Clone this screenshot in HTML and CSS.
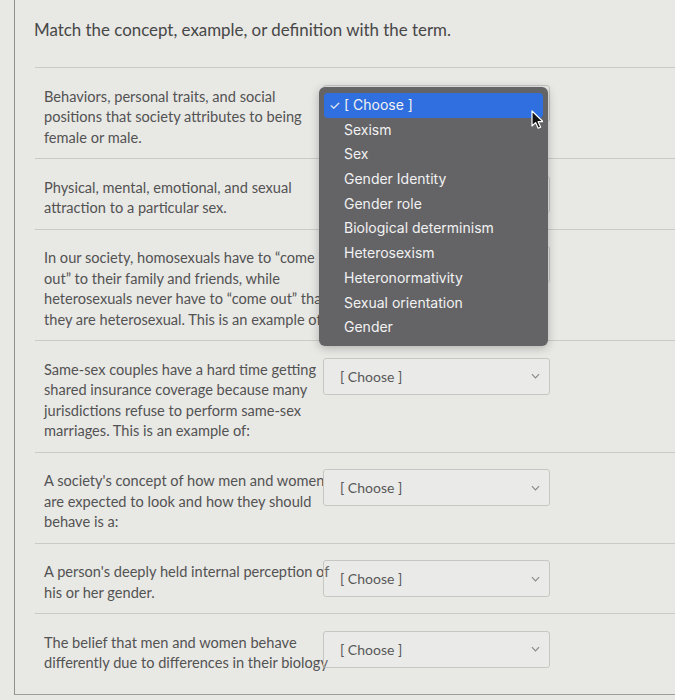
FILE: index.html
```html
<!DOCTYPE html>
<html lang="en">
<head>
  <meta charset="UTF-8" />
  <meta name="viewport" content="width=device-width, initial-scale=1.0" />
  <title>Quiz | Matching</title>
  <link rel="stylesheet" href="styles.css">
</head>
<body>
  <div class="quiz">
    <div class="quiz-header">
      <p class="prompt">Match the concept, example, or definition with the term.</p>
    </div>
    <div class="answers">
      <div class="match-row">
        <div class="term">Behaviors, personal traits, and social positions that society attributes to being female or male.</div>
        <div class="choice"><span>[ Choose ]</span><svg class="chev" viewBox="0 0 10 6"><path d="M1 1l4 4 4-4"/></svg></div>
      </div>
      <div class="match-row">
        <div class="term">Physical, mental, emotional, and sexual attraction to a particular sex.</div>
        <div class="choice"><span>[ Choose ]</span><svg class="chev" viewBox="0 0 10 6"><path d="M1 1l4 4 4-4"/></svg></div>
      </div>
      <div class="match-row">
        <div class="term">In our society, homosexuals have to “come out” to their family and friends, while heterosexuals never have to “come out” that they are heterosexual. This is an example of:</div>
        <div class="choice"><span>[ Choose ]</span><svg class="chev" viewBox="0 0 10 6"><path d="M1 1l4 4 4-4"/></svg></div>
      </div>
      <div class="match-row">
        <div class="term">Same-sex couples have a hard time getting shared insurance coverage because many jurisdictions refuse to perform same-sex marriages. This is an example of:</div>
        <div class="choice"><span>[ Choose ]</span><svg class="chev" viewBox="0 0 10 6"><path d="M1 1l4 4 4-4"/></svg></div>
      </div>
      <div class="match-row">
        <div class="term">A society's concept of how men and women are expected to look and how they should behave is a:</div>
        <div class="choice"><span>[ Choose ]</span><svg class="chev" viewBox="0 0 10 6"><path d="M1 1l4 4 4-4"/></svg></div>
      </div>
      <div class="match-row">
        <div class="term">A person's deeply held internal perception of his or her gender.</div>
        <div class="choice"><span>[ Choose ]</span><svg class="chev" viewBox="0 0 10 6"><path d="M1 1l4 4 4-4"/></svg></div>
      </div>
      <div class="match-row">
        <div class="term">The belief that men and women behave differently due to differences in their biology</div>
        <div class="choice"><span>[ Choose ]</span><svg class="chev" viewBox="0 0 10 6"><path d="M1 1l4 4 4-4"/></svg></div>
      </div>
    </div>

    <!-- open dropdown of the first row -->
    <ul class="menu">
      <li class="selected"><span class="check">✓</span>[ Choose ]</li>
      <li>Sexism</li>
      <li>Sex</li>
      <li>Gender Identity</li>
      <li>Gender role</li>
      <li>Biological determinism</li>
      <li>Heterosexism</li>
      <li>Heteronormativity</li>
      <li>Sexual orientation</li>
      <li>Gender</li>
    </ul>
    <svg class="cursor" viewBox="0 0 12 19">
      <path d="M1 1v15l3.6-3.4 2.6 5.6 2.4-1.1-2.5-5.4h5z" fill="#111" stroke="#fff" stroke-width="1.2" stroke-linejoin="round"/>
    </svg>
  </div>
</body>
</html>
```

FILE: styles.css
```css
body {
  margin: 0;
  background: #e8e8e5;
  font-family: 'Lato', 'Liberation Sans', sans-serif;
  color: #535353;
}
.quiz {
  position: relative;
  margin-left: 14px;
  border-left: 1px solid #8f8f8c;
  border-bottom: 1px solid #9c9c99;
  padding-bottom: 10px;
}
.quiz-header {
  height: 67px;
  padding-left: 19px;
  box-sizing: border-box;
}
.prompt {
  margin: 0;
  padding-top: 19px;
  font-size: 16.9px;
  line-height: 22px;
  color: #474747;
}
.answers {
  margin-left: 20px;
}
.match-row {
  display: flex;
  align-items: flex-start;
  border-top: 1px solid #cacac6;
  padding: 18.5px 0 10px 9px;
}
.term {
  width: 290px;
  margin-right: -11px;
  flex-shrink: 0;
  font-size: 14.6px;
  line-height: 20.5px;
}
.choice {
  display: flex;
  align-items: center;
  justify-content: space-between;
  width: 227px;
  height: 37px;
  box-sizing: border-box;
  margin-top: -2px;
  padding: 0 9px 0 16px;
  background: rgba(255,255,255,0.12);
  border: 1px solid #c6c6c3;
  border-radius: 3px;
  font-size: 14px;
  color: #585858;
}
.chev {
  width: 9px;
  height: 6px;
  fill: none;
  stroke: #8a8a8a;
  stroke-width: 1.3;
}
.menu {
  position: absolute;
  left: 304px;
  top: 87px;
  width: 229px;
  margin: 0;
  padding: 6px 5px;
  box-sizing: border-box;
  list-style: none;
  background: #646467;
  border-radius: 6px;
  box-shadow: 0 2px 10px rgba(0,0,0,0.25);
  font-family: 'Inter', 'Noto Sans', sans-serif;
  font-size: 14px;
  color: #f2f2f2;
}
.menu li {
  height: 24.7px;
  line-height: 24px;
  padding-left: 20px;
  border-radius: 4px;
  position: relative;
}
.menu li.selected {
  background: #2f6fdf;
}
.check {
  position: absolute;
  left: 5px;
  font-size: 13px;
}
.cursor {
  position: absolute;
  left: 516px;
  top: 110px;
  width: 12px;
  height: 19px;
}
```
